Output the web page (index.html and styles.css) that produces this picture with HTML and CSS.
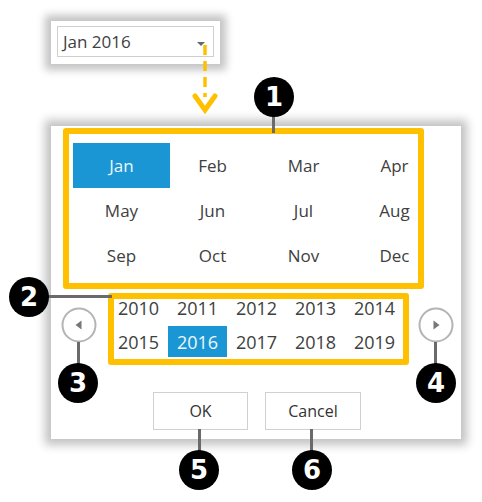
FILE: index.html
```html
<!DOCTYPE html>
<html>
<head>
<meta charset="utf-8">
<link rel="stylesheet" href="styles.css">
</head>
<body>
<div class="page">
  <div class="dropdown">
    <div class="input">
      <span class="value">Jan 2016</span>
      <span class="caret"></span>
    </div>
  </div>

  <div class="panel">
    <div class="months">
      <div class="cell sel">Jan</div><div class="cell">Feb</div><div class="cell">Mar</div><div class="cell">Apr</div>
      <div class="cell">May</div><div class="cell">Jun</div><div class="cell">Jul</div><div class="cell">Aug</div>
      <div class="cell">Sep</div><div class="cell">Oct</div><div class="cell">Nov</div><div class="cell">Dec</div>
    </div>
    <div class="yearrow">
      <div class="nav">
        <svg width="36" height="36" viewBox="0 0 36 36"><circle cx="18" cy="18" r="16.5" fill="#fff" stroke="#b4b4b4" stroke-width="2"/><path d="M14.5 18 L20.5 13.5 L20.5 22.5 Z" fill="#777"/></svg>
      </div>
      <div class="years">
        <div class="y">2010</div><div class="y">2011</div><div class="y">2012</div><div class="y">2013</div><div class="y">2014</div>
        <div class="y">2015</div><div class="y sel">2016</div><div class="y">2017</div><div class="y">2018</div><div class="y">2019</div>
      </div>
      <div class="nav">
        <svg width="36" height="36" viewBox="0 0 36 36"><circle cx="18" cy="18" r="16.5" fill="#fff" stroke="#b4b4b4" stroke-width="2"/><path d="M21.5 18 L15.5 13.5 L15.5 22.5 Z" fill="#777"/></svg>
      </div>
    </div>
    <div class="buttons">
      <div class="btn ok">OK</div>
      <div class="btn cancel">Cancel</div>
    </div>
  </div>

  <!-- annotations -->
  <div class="frame f1"></div>
  <div class="frame f2"></div>
  <svg class="arrow" width="30" height="75" viewBox="0 0 30 75">
    <line x1="15" y1="0" x2="15" y2="52" stroke="#ffc000" stroke-width="3.5" stroke-dasharray="10 6"/>
    <path d="M5 51 L15 65 L25 51" fill="none" stroke="#ffc000" stroke-width="5" stroke-linecap="round" stroke-linejoin="miter"/>
  </svg>
  <div class="ln l1"></div>
  <div class="ln l2"></div>
  <div class="ln l3"></div>
  <div class="ln l4"></div>
  <div class="ln l5"></div>
  <div class="ln l6"></div>
  <div class="badge b1">1</div>
  <div class="badge b2">2</div>
  <div class="badge b3">3</div>
  <div class="badge b4">4</div>
  <div class="badge b5">5</div>
  <div class="badge b6">6</div>
</div>
</body>
</html>
```
FILE: styles.css
```css
* { box-sizing: border-box; }
html, body { margin: 0; padding: 0; background: #fff; }
body { font-family: "Open Sans", "DejaVu Sans", sans-serif; color: #444; }
.page { position: relative; width: 482px; height: 502px; overflow: hidden; padding-top: 21px; }

.dropdown {
  margin-left: 51px; width: 169px; height: 43px; background: #fff;
  box-shadow: 0 0 8px 6px #c4c4c4; padding: 5px 6px 7px 6px;
}
.input {
  height: 31px; border: 1px solid #cfcfcf; display: flex; align-items: center;
  justify-content: space-between; padding: 0 8px 0 5px;
}
.value { font-size: 17px; color: #404040; line-height: 1; }
.caret {
  width: 0; height: 0; border-left: 4.5px solid transparent; border-right: 4.5px solid transparent;
  border-top: 4px solid #666; margin-top: 4px;
}

.panel {
  margin-left: 51px; margin-top: 62px; width: 410px; height: 313px; background: #fff;
  box-shadow: 0 0 9px 6px #c2c2c2; padding-top: 17px;
}
.months {
  display: grid; grid-template-columns: repeat(4, 91px); grid-auto-rows: 45px;
  padding-left: 25px;
}
.cell { display: flex; align-items: center; justify-content: center; font-size: 17px; color: #404040; }
.cell.sel { background: #1b96d4; color: #eef7fc; margin: 0 -3px; }

.yearrow { display: flex; align-items: center; margin-top: 14px; padding-left: 10px; }
.nav { width: 36px; height: 36px; display: flex; }
.years {
  display: grid; grid-template-columns: repeat(5, 59px); grid-auto-rows: 31px; row-gap: 3px;
  margin: 0 14px 0 12px;
}
.y { display: flex; align-items: center; justify-content: center; font-size: 18px; color: #404040; }
.y.sel { background: #1b96d4; color: #eef7fc; }

.buttons { display: flex; gap: 17px; margin-top: 35px; padding-left: 102px; }
.btn {
  height: 38px; border: 1px solid #d0d0d0; display: flex; align-items: center; justify-content: center;
  font-size: 16px; color: #333;
}
.ok { width: 95px; }
.cancel { width: 96px; }

.frame { position: absolute; border: 6.5px solid #ffc000; border-radius: 3px; }
.f1 { left: 63px; top: 128px; width: 361px; height: 161px; }
.f2 { left: 108px; top: 293px; width: 301px; height: 72px; }
.arrow { position: absolute; left: 190px; top: 45px; }

.ln { position: absolute; background: #6a6a6a; }
.l1 { left: 272px; top: 110px; width: 3px; height: 23px; }
.l2 { left: 45px; top: 295px; width: 67px; height: 3px; }
.l3 { left: 77px; top: 342px; width: 3px; height: 25px; }
.l4 { left: 434px; top: 342px; width: 3px; height: 25px; }
.l5 { left: 198px; top: 429px; width: 3px; height: 25px; }
.l6 { left: 310px; top: 429px; width: 3px; height: 25px; }

.badge {
  position: absolute; width: 40px; height: 40px; border-radius: 50%; background: #000;
  color: #fff; font-family: "DejaVu Sans", "Liberation Sans", sans-serif; font-weight: bold;
  font-size: 26px; display: flex; align-items: center; justify-content: center; line-height: 1;
}
.b1 { left: 254px; top: 77px; }
.b2 { left: 9px; top: 277px; }
.b3 { left: 58px; top: 363px; }
.b4 { left: 416px; top: 363px; }
.b5 { left: 179px; top: 450px; }
.b6 { left: 292px; top: 450px; }
```
